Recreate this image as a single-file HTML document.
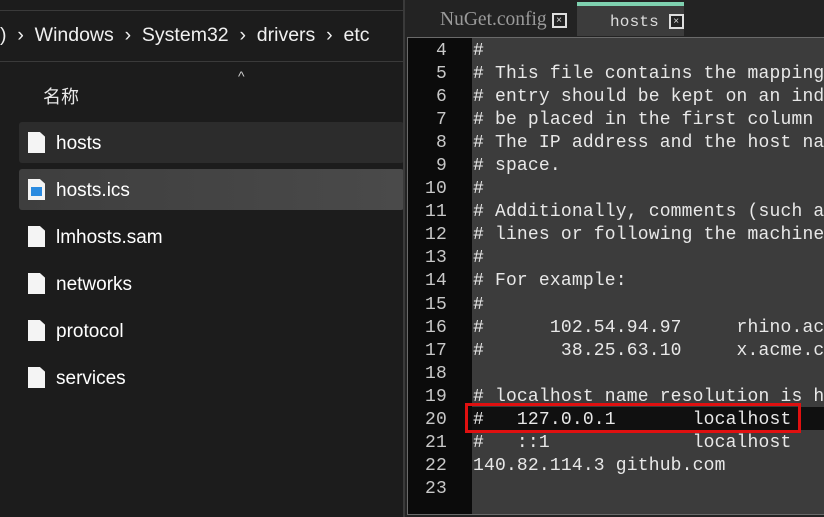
<!DOCTYPE html>
<html><head><meta charset="utf-8"><style>
*{margin:0;padding:0;box-sizing:border-box}
body{width:824px;height:517px;overflow:hidden;background:#1c1c1c;position:relative;font-family:"Segoe UI","Liberation Sans","Noto Sans CJK SC",sans-serif;color:#fff}
.abs{position:absolute}
.crumb{top:24px;left:0;font-size:19.5px;color:#f0f0f0;white-space:nowrap}
.row{position:absolute;left:19px;width:385px;height:41px;border-radius:3px}
.row span{position:absolute;left:37px;top:11px;font-size:19px;color:#fff}
.ic{position:absolute;left:9px;top:10px;width:17px;height:21px;background:#f4f4f4;clip-path:polygon(0 0,70% 0,100% 22%,100% 100%,0 100%)}
.code{font-family:"Liberation Mono","DejaVu Sans Mono",monospace;font-size:18px;letter-spacing:0.18px;line-height:23.05px;white-space:pre;color:#e8e8e8}
.ln{text-align:right;color:#c8c8c8}
.cb{display:inline-block;width:15px;height:15px;border:2px solid #ddd;background:#222;vertical-align:middle;font-size:10px;line-height:11px;text-align:center;color:#ddd;font-family:"Liberation Sans",sans-serif;letter-spacing:0}
</style></head><body>
<div class="abs" style="left:0;top:10px;width:404px;height:1px;background:#3a3a3a"></div>
<div class="abs" style="left:0;top:61px;width:404px;height:1px;background:#3a3a3a"></div>
<div class="abs crumb">) &nbsp;› &nbsp;Windows &nbsp;› &nbsp;System32 &nbsp;› &nbsp;drivers &nbsp;› &nbsp;etc</div>
<div class="abs" style="left:238px;top:68px;font-size:14px;color:#ccc">^</div>
<div class="abs" style="left:43px;top:83px;font-size:18px;color:#e8e8e8">名称</div>
<div class="row" style="top:122px;background:#2c2c2c"><div class="ic"></div><span>hosts</span></div>
<div class="row" style="top:169px;background:linear-gradient(90deg,#3e3e3e,#4a4a4a)"><div class="ic"></div><div class="abs" style="left:12px;top:18px;width:11px;height:9px;background:#2b8be0"></div><span>hosts.ics</span></div>
<div class="row" style="top:216px"><div class="ic"></div><span>lmhosts.sam</span></div>
<div class="row" style="top:263px"><div class="ic"></div><span>networks</span></div>
<div class="row" style="top:310px"><div class="ic"></div><span>protocol</span></div>
<div class="row" style="top:357px"><div class="ic"></div><span>services</span></div>
<div class="abs" style="left:403px;top:0;width:2px;height:517px;background:#3a3a3a"></div>
<div class="abs" style="left:405px;top:0;width:419px;height:517px;background:#232323"></div>
<div class="abs" style="left:440px;top:9px;font-family:'Liberation Serif','Noto Serif CJK SC',serif;font-size:19.5px;color:#9a9a9a;white-space:nowrap">NuGet.config <span class="cb">×</span></div>
<div class="abs" style="left:577px;top:2px;width:107px;height:34px;background:#3c3c3c;border-top:4px solid #7fd1b0"></div>
<div class="abs code" style="left:610px;top:11px;font-size:16px;color:#ddd">hosts <span class="cb">×</span></div>
<div class="abs" style="left:407px;top:37px;width:417px;height:478px;border:1px solid #6a6a6a;border-right:none;background:#3c3c3c;overflow:hidden">
<div class="abs" style="left:0;top:0;width:64px;height:476px;background:#0b0b0b"></div>
<div class="abs" style="left:64px;top:369px;width:360px;height:23px;background:#101010"></div>
<div class="abs code ln" style="left:0;top:2px;width:39px">4
5
6
7
8
9
10
11
12
13
14
15
16
17
18
19
20
21
22
23</div>
<div class="abs code" style="left:65px;top:2px">#
# This file contains the mapping of IP
# entry should be kept on an individual
# be placed in the first column followe
# The IP address and the host name shou
# space.
#
# Additionally, comments (such as these
# lines or following the machine name d
#
# For example:
#
#      102.54.94.97     rhino.acme.com
#       38.25.63.10     x.acme.com

# localhost name resolution is handled
#   127.0.0.1       localhost
#   ::1             localhost
140.82.114.3 github.com
</div>
</div>
<div class="abs" style="left:465px;top:403px;width:336px;height:30px;border:3px solid #e01010"></div>
</body></html>
